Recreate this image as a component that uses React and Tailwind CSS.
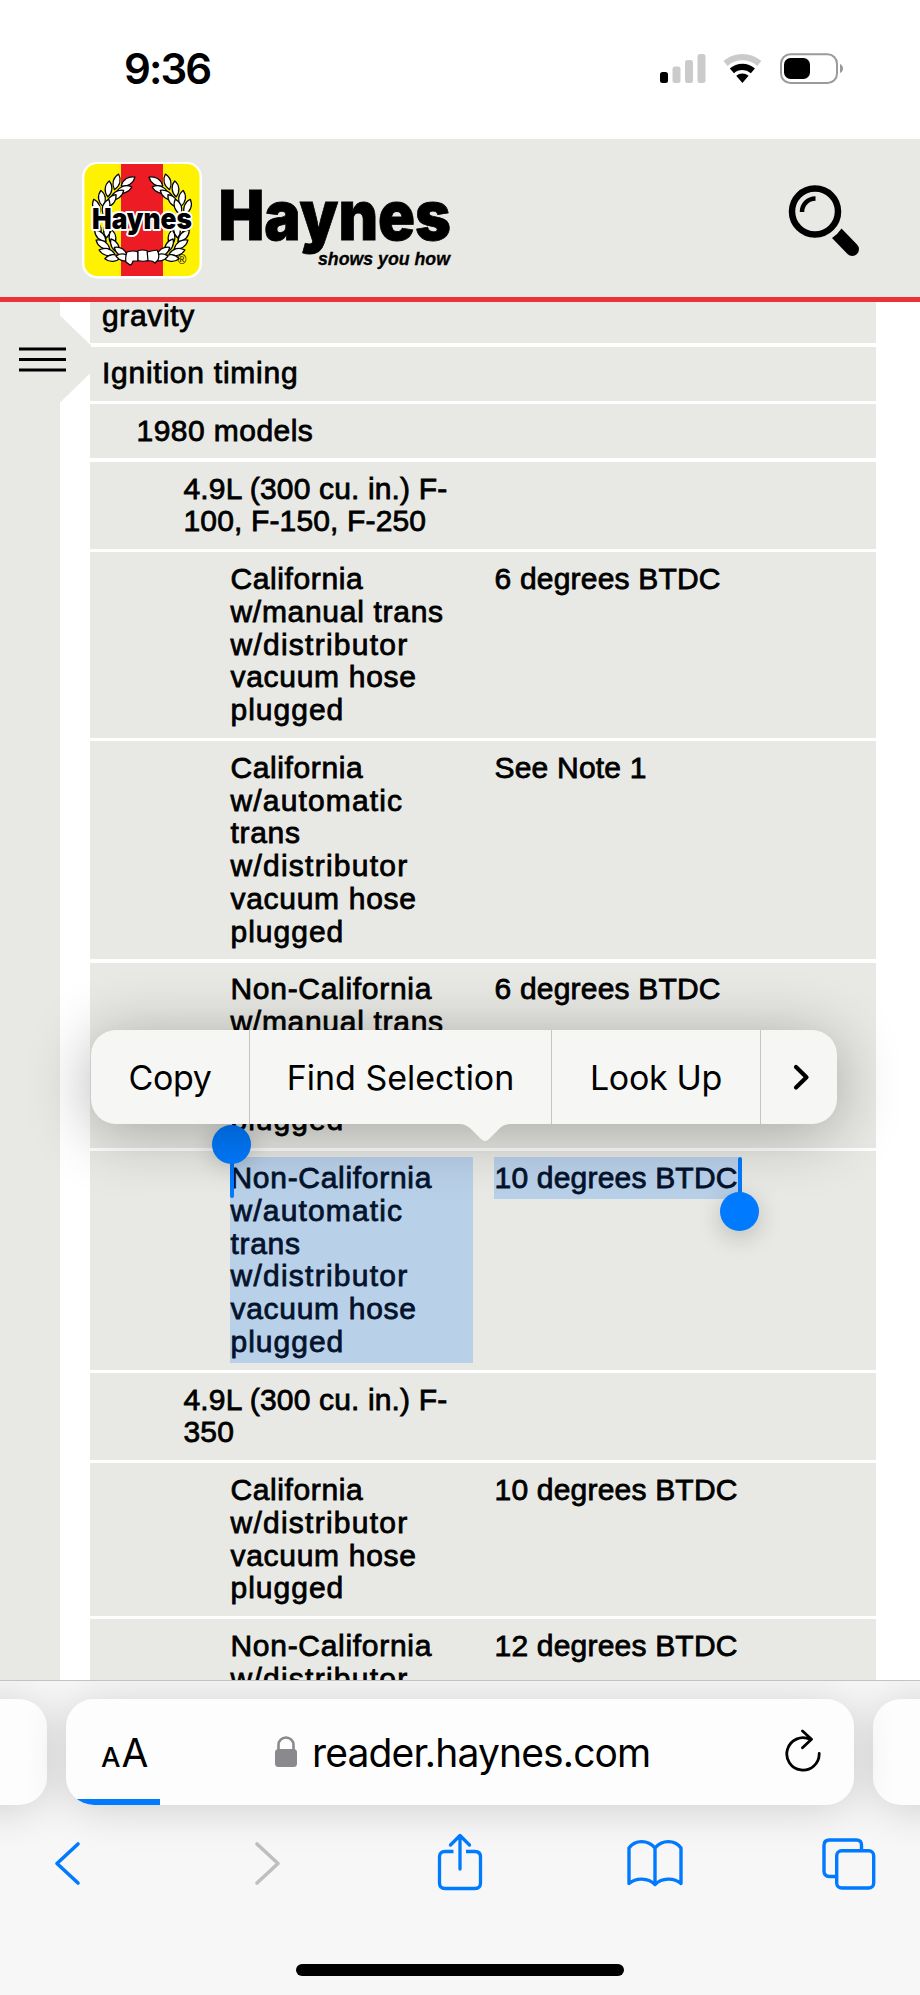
import { Fragment } from "react";

const ROWS = [
  { indent: "pl-[12px]", tracking: "tracking-[0.65px]", lines: ["gravity"] },
  { indent: "pl-[12px]", tracking: "tracking-[0.75px]", lines: ["Ignition timing"] },
  { indent: "pl-[46.5px]", tracking: "tracking-[0.45px]", lines: ["1980 models"] },
  {
    indent: "pl-[93.5px]",
    tracking: "tracking-[0.15px]",
    lines: ["4.9L (300 cu. in.) F-", "100, F-150, F-250"],
  },
  {
    indent: "pl-[140.5px]",
    lines: ["California", "w/manual trans", "w/distributor", "vacuum hose", "plugged"],
    value: "6 degrees BTDC",
  },
  {
    indent: "pl-[140.5px]",
    lines: ["California", "w/automatic", "trans", "w/distributor", "vacuum hose", "plugged"],
    value: "See Note 1",
  },
  {
    indent: "pl-[140.5px]",
    lines: ["Non-California", "w/manual trans", "w/distributor", "vacuum hose", "plugged"],
    value: "6 degrees BTDC",
  },
  {
    indent: "pl-[140.5px]",
    lines: ["Non-California", "w/automatic", "trans", "w/distributor", "vacuum hose", "plugged"],
    value: "10 degrees BTDC",
    selected: true,
  },
  {
    indent: "pl-[93.5px]",
    tracking: "tracking-[0.15px]",
    lines: ["4.9L (300 cu. in.) F-", "350"],
  },
  {
    indent: "pl-[140.5px]",
    lines: ["California", "w/distributor", "vacuum hose", "plugged"],
    value: "10 degrees BTDC",
  },
  {
    indent: "pl-[140.5px]",
    lines: ["Non-California", "w/distributor", "vacuum hose", "plugged"],
    value: "12 degrees BTDC",
  },
];

const WIDE_LINES = {
  "w/distributor": "tracking-[1.25px]",
  "w/automatic": "tracking-[1.15px]",
  plugged: "tracking-[1px]",
  California: "tracking-[0.6px]",
};

// leaves on the left half of the wreath: x, y, rotation
const LEAVES = [
  [47, 20.5, 58], [35.5, 21, 15], [43, 28.5, 72], [27.5, 28, 5],
  [36, 34, 55], [21, 37.5, -8], [30, 40, 38], [15.5, 46, -20],
  [25, 46, 20], [16, 66, -28], [26, 69, 5], [19.5, 75, -45],
  [31.5, 77, -5], [22, 83.5, -58], [34, 85, -30], [26, 91, -76],
  [40, 91, -55], [32, 97, -95], [43, 96.5, -80],
];

function StatusBar() {
  return (
    <div className="h-[139px] shrink-0 bg-white flex items-start justify-between pl-[124px] pr-[76px]">
      <span className="mt-[44px] font-['Inter'] text-[42px] leading-[50px] font-semibold tracking-[-1.9px]">
        9:36
      </span>
      <svg className="mt-[50px]" width="186" height="38" viewBox="0 0 186 38">
        <rect x="2" y="22" width="8" height="11" rx="2.5" />
        <g fill="#cbcbcb">
          <rect x="14.5" y="16.5" width="8" height="16.5" rx="2.5" />
          <rect x="27" y="10" width="8" height="23" rx="2.5" />
          <rect x="39.5" y="4" width="8" height="29" rx="2.5" />
        </g>
        <g fill="none" strokeWidth="6.3">
          <path d="M67.5 13.5A25.8 25.8 0 0 1 101.3 13.5" stroke="#cbcbcb" />
          <path d="M73.9 20.9A16 16 0 0 1 94.9 20.9" stroke="#000" />
        </g>
        <path d="M78.2 25.8A9.5 9.5 0 0 1 90.6 25.8L84.4 33z" />
        <rect x="123" y="4.2" width="56" height="28.8" rx="9.5" fill="none" stroke="#9b9b9b" strokeWidth="2" />
        <rect x="126" y="8" width="26" height="21" rx="6.5" />
        <path d="M182 14q3 1.5 3 4.5t-3 4.5z" fill="#999" />
      </svg>
    </div>
  );
}

function Wreath() {
  return LEAVES.map(([x, y, r], i) => (
    <path
      key={i}
      d="M0-8.2C4.5-3.5 4.5 3 0 8C-4.5 3-4.5-3.5 0-8.2Z"
      transform={`translate(${x} ${y}) rotate(${r})`}
    />
  ));
}

function Logo() {
  return (
    <svg width="122" height="118" viewBox="0 0 122 118">
      <rect x="1" y="1" width="120" height="116.5" rx="15" fill="#fff" />
      <rect x="3.5" y="3" width="115" height="112" rx="12.5" fill="#fff200" />
      <path d="M40 3h42v112H40z" fill="#ed1c24" />
      <g fill="#fff" stroke="#000" strokeWidth="1.2" strokeLinejoin="round">
        <Wreath />
        <g transform="translate(122 0) scale(-1 1)">
          <Wreath />
        </g>
        <path d="M46 91q6-2 11 0v9q-3 0-5 0-1 4-3 4l-4-3q-1-5 1-10z" />
        <path d="M76 89q-6 1-10 2v9q5-1 8 2l3-3q2-5-1-10z" />
        <path d="M57 89.5q4-1 9 0l1 10q-5 1.5-10 0z" />
      </g>
      <text
        x="11" y="67.5" textLength="100" lengthAdjust="spacingAndGlyphs"
        className="font-['Inter'] font-black text-[28.5px]"
        stroke="#fff" strokeWidth="4" strokeLinejoin="round" paintOrder="stroke"
      >
        Haynes
      </text>
      <text x="96.5" y="103" className="font-['Liberation_Sans'] text-[12px]">®</text>
    </svg>
  );
}

function Header() {
  return (
    <header className="h-[163px] shrink-0 bg-[#e8e9e4] border-b-[5px] border-[#ed3237] flex items-start pl-[81px] pr-[60px]">
      <div className="pt-[22px]">
        <Logo />
      </div>
      <svg className="ml-[13px] mt-[41px] overflow-visible" width="240" height="95" viewBox="0 0 240 95">
        <text
          x="2.5" y="60" textLength="232.5" lengthAdjust="spacingAndGlyphs"
          className="font-['Inter'] font-black text-[69px]" stroke="#000" strokeWidth="0.8"
        >
          Haynes
        </text>
        <text
          x="102" y="85" textLength="132" lengthAdjust="spacingAndGlyphs"
          className="font-['Liberation_Sans'] font-bold italic text-[18.5px]" stroke="#000" strokeWidth="0.3"
        >
          shows you how
        </text>
      </svg>
      <svg className="ml-auto mt-[43px]" width="74" height="74" viewBox="0 0 74 74">
        <circle cx="29" cy="29.5" r="23" fill="none" stroke="#000" strokeWidth="6.5" />
        <path d="M16 30a13.5 13.5 0 0 1 13.5-13.5" fill="none" stroke="#000" strokeWidth="4.5" />
        <path d="M46 56q6-4 9.5-9.5l15.5 16a6.5 6.5 0 0 1-9.5 9.5z" />
      </svg>
    </header>
  );
}

function Row({ indent, tracking = "tracking-[0.7px]", lines, value, selected }) {
  return (
    <div className="flex shrink-0 items-start w-[786px] mb-[3.3px] bg-[#e8e9e4] pt-[10.75px] pb-[10.75px]">
      <div className={`w-[382px] shrink-0 ${indent}`}>
        <div className={selected ? "relative text-[#04132c]" : "relative"}>
          {selected && (
            <div className="absolute -left-[1px] -top-[5px] w-[243px] h-[206px] bg-[#b9d0e9]" />
          )}
          <p className={`relative whitespace-nowrap ${tracking}`}>
            {lines.map((line, i) => (
              <Fragment key={line}>
                {i > 0 && <br />}
                <span className={WIDE_LINES[line]}>{line}</span>
              </Fragment>
            ))}
          </p>
          {selected && (
            <>
              <div className="absolute -left-[1px] top-0 w-[4px] h-[36px] rounded-b bg-[#007aff]" />
              <div className="absolute -left-[18.5px] -top-[37px] size-[39px] rounded-full bg-[#007aff] shadow-[0_2px_24px_rgba(0,0,0,0.2)]" />
            </>
          )}
        </div>
      </div>
      {value && (
        <div
          className={`tracking-[0.2px] whitespace-nowrap pl-[22.5px] ${
            selected ? "relative text-[#04132c]" : ""
          }`}
        >
          {selected && (
            <div className="absolute left-[22px] -top-[5px] w-[244px] h-[42px] bg-[#b9d0e9]" />
          )}
          <span className="relative">{value}</span>
          {selected && (
            <>
              <div className="absolute left-[265.5px] -top-[5px] w-[4px] h-[38px] rounded-t bg-[#007aff]" />
              <div className="absolute left-[248px] top-[30px] size-[39px] rounded-full bg-[#007aff] shadow-[0_6px_24px_rgba(0,0,0,0.2)]" />
            </>
          )}
        </div>
      )}
    </div>
  );
}

function SelectionMenu() {
  return (
    <div className="absolute left-[91px] top-[1030px] z-10 flex h-[94px] w-[746px] rounded-[25px] bg-[#f6f6f5] font-['Inter'] text-[34px] shadow-[0_8px_64px_rgba(0,0,0,0.3)]">
      <div className="flex w-[159px] items-center justify-center border-r border-[#c4c4c2]">
        <span className="tracking-[-0.4px]">Copy</span>
      </div>
      <div className="flex w-[302px] items-center justify-center border-r border-[#c4c4c2]">
        <span>Find Selection</span>
      </div>
      <div className="flex w-[209px] items-center justify-center border-r border-[#c4c4c2]">
        <span className="tracking-[-0.3px]">Look Up</span>
      </div>
      <div className="flex flex-1 items-center justify-center pl-[4px]">
        <svg width="20" height="30" viewBox="0 0 20 30" fill="none" stroke="#000" strokeWidth="4.2" strokeLinecap="round" strokeLinejoin="round">
          <path d="M5 5l10.5 10.3L5 25.5" />
        </svg>
      </div>
      <svg className="absolute left-[366px] top-[93px]" width="56" height="20" viewBox="0 0 56 20">
        <path d="M0 1c7 0 10 1 15 6l9 9q4 4 8 0l9-9c5-5 8-6 15-6z" fill="#f6f6f5" />
      </svg>
    </div>
  );
}

function Page() {
  return (
    <main className="relative h-[1378px] shrink-0 overflow-hidden bg-white flex">
      <aside className="w-[60px] shrink-0 bg-[#e8e9e4]" />
      <svg className="absolute left-0 top-0" width="91" height="101" viewBox="0 0 91 101">
        <path d="M60 13.5l31 30v27l-31 30z" fill="#e8e9e4" />
        <path d="M19 47h47M19 57.5h47M19 68h47" stroke="#000" strokeWidth="3" />
      </svg>
      <div className="ml-[30px] -mt-[13px] flex flex-col font-['Liberation_Sans'] text-[30px] leading-[32.8px] [-webkit-text-stroke:0.8px]">
        {ROWS.map((row, i) => (
          <Row key={i} {...row} />
        ))}
      </div>
    </main>
  );
}

function BrowserBar() {
  return (
    <footer className="relative h-[315px] shrink-0 overflow-hidden border-t border-[#c3c3c4] bg-[#f7f7f7] flex flex-col">
      <div className="mt-[18px] flex gap-[19px] -ml-[60px] w-[1040px]">
        <div className="h-[106px] w-[107px] shrink-0 rounded-[28px] bg-[#fdfdfd] shadow-[0_4px_44px_rgba(0,0,0,0.16)]" />
        <div className="relative h-[106px] w-[788px] shrink-0 rounded-[28px] shadow-[0_4px_44px_rgba(0,0,0,0.16)]">
          <div className="relative flex h-full items-center overflow-hidden rounded-[28px] bg-[#fdfdfd] pl-[35px] pr-[32px] font-['Inter']">
            <span className="flex w-[50px] items-baseline pt-[2px]">
              <span className="text-[27.5px] font-medium">A</span>
              <span className="ml-[1px] text-[39px]">A</span>
            </span>
            <svg className="ml-[123px]" width="24" height="34" viewBox="0 0 24 34">
              <rect x="1" y="14" width="22" height="18" rx="3.5" fill="#8a8a8e" />
              <path d="M4.5 15V10a7.5 7.5 0 0 1 15 0v5" fill="none" stroke="#8a8a8e" strokeWidth="2.6" />
            </svg>
            <span className="ml-[14px] pt-[2px] text-[39px] tracking-[-0.85px]">reader.haynes.com</span>
            <svg className="ml-auto" width="38" height="46" viewBox="0 0 38 46" fill="none" stroke="#000" strokeWidth="2.8" strokeLinecap="round" strokeLinejoin="round">
              <path d="M26 10.3A16.2 16.2 0 1 0 35.2 24.5M18.5 2L27.5 10.3L18.5 18.8" />
            </svg>
            <div className="absolute left-0 bottom-0 h-[6px] w-[94px] bg-[#007aff]" />
          </div>
        </div>
        <div className="h-[106px] w-[107px] shrink-0 rounded-[28px] bg-[#fdfdfd] shadow-[0_4px_44px_rgba(0,0,0,0.16)]" />
      </div>

      <div className="mt-[27px] flex items-center pl-[52px] text-[#007aff]">
        <svg width="30" height="60" viewBox="0 0 30 60" fill="none" stroke="currentColor" strokeWidth="3.6" strokeLinecap="round" strokeLinejoin="round">
          <path d="M26 12L5 31.5L26 51" />
        </svg>
        <svg className="ml-[170px]" width="30" height="60" viewBox="0 0 30 60" fill="none" stroke="#bfbfbf" strokeWidth="3.6" strokeLinecap="round" strokeLinejoin="round">
          <path d="M5 12L26 31.5L5 51" />
        </svg>
        <svg className="ml-[154px]" width="48" height="60" viewBox="0 0 48 60" fill="none" stroke="currentColor" strokeWidth="3.3">
          <path d="M17.5 19.5H9q-5.5 0-5.5 5.5v26q0 5.5 5.5 5.5h30q5.5 0 5.5-5.5V25q0-5.5-5.5-5.5h-9" />
          <path d="M24 37V4M14.5 13l9.5-9.5 9.5 9.5" strokeLinecap="round" strokeLinejoin="round" />
        </svg>
        <svg className="ml-[142px]" width="58" height="60" viewBox="0 0 58 60" fill="none" stroke="currentColor" strokeWidth="3.4" strokeLinecap="round" strokeLinejoin="round">
          <path d="M29 16C22 7.5 9 7.5 3 16V51.5C10 45.5 22 45.5 29 52.5C36 45.5 48 45.5 55 51.5V16C49 7.5 36 7.5 29 16V52" />
        </svg>
        <svg className="ml-[137px]" width="56" height="60" viewBox="0 0 56 60" fill="none" stroke="currentColor" strokeWidth="3.4" strokeLinejoin="round">
          <path d="M40.5 18V13q0-5-5-5H8.5Q3 8 3 13.5V39q0 5.5 5.5 5.5h7" />
          <rect x="15.7" y="18.7" width="37" height="37.3" rx="5" />
        </svg>
      </div>
      <div className="absolute bottom-[19px] left-[296px] h-[12px] w-[328px] rounded-full bg-black" />
    </footer>
  );
}

export default function App() {
  return (
    <div className="relative flex h-[1995px] w-[920px] flex-col overflow-hidden bg-white text-black">
      <StatusBar />
      <Header />
      <Page />
      <BrowserBar />
      <SelectionMenu />
    </div>
  );
}
